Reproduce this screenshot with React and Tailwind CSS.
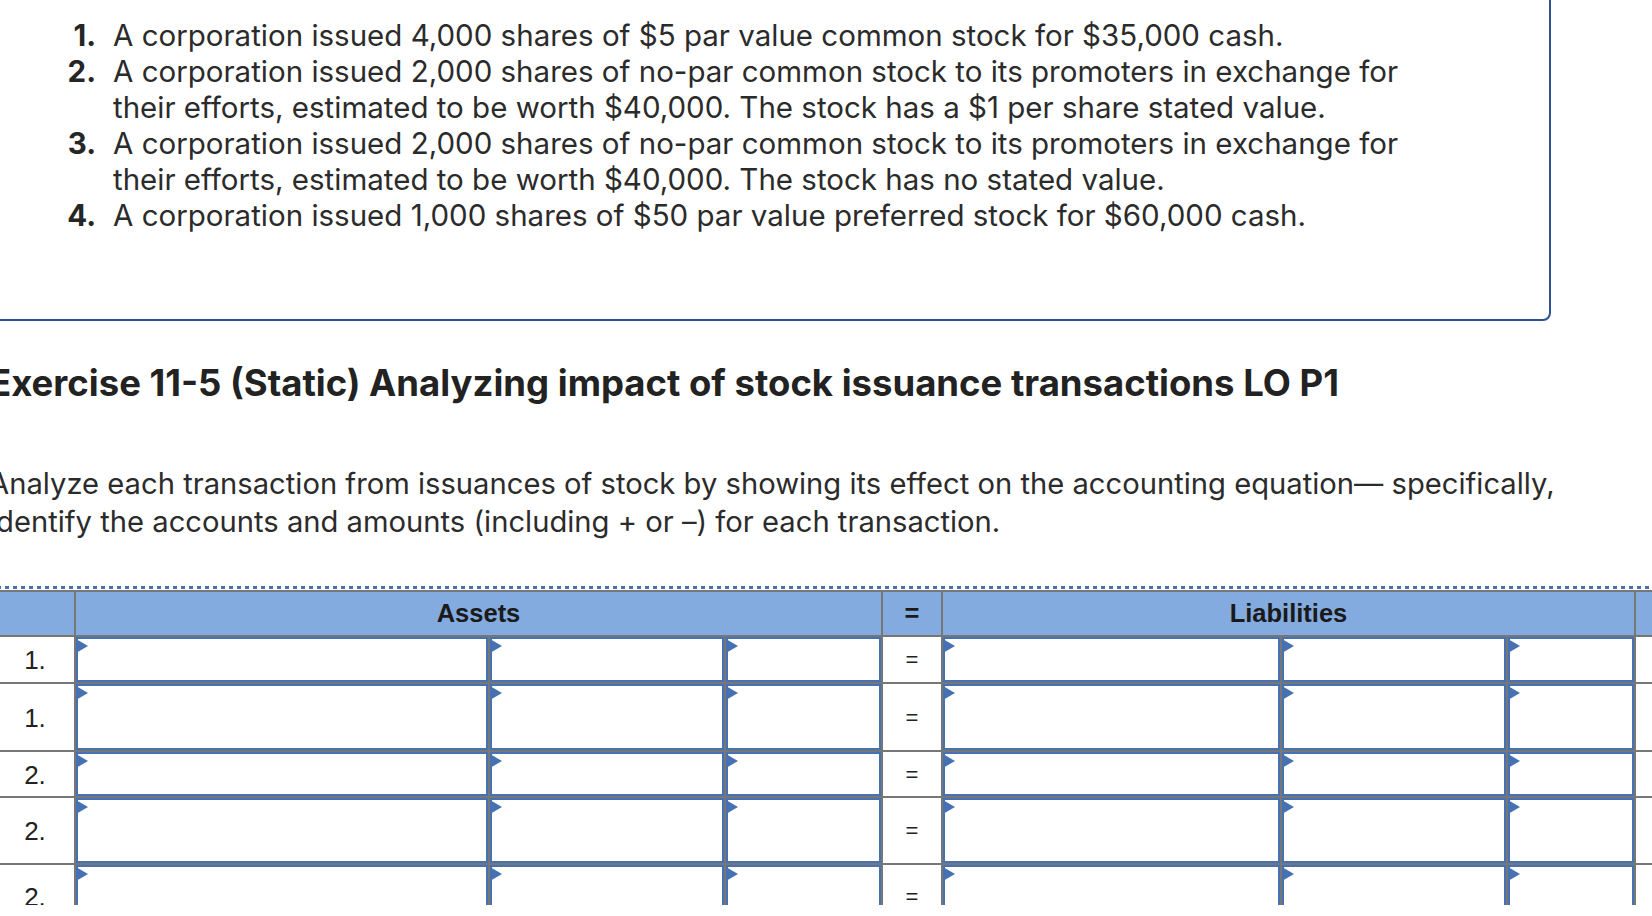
const items = [
  { n: '1.', lines: ['A corporation issued 4,000 shares of $5 par value common stock for $35,000 cash.'] },
  {
    n: '2.',
    lines: [
      'A corporation issued 2,000 shares of no-par common stock to its promoters in exchange for',
      'their efforts, estimated to be worth $40,000. The stock has a $1 per share stated value.',
    ],
  },
  {
    n: '3.',
    lines: [
      'A corporation issued 2,000 shares of no-par common stock to its promoters in exchange for',
      'their efforts, estimated to be worth $40,000. The stock has no stated value.',
    ],
  },
  { n: '4.', lines: ['A corporation issued 1,000 shares of $50 par value preferred stock for $60,000 cash.'] },
];

const rows = [
  { label: '1.', h: 'h-[45px]' },
  { label: '1.', h: 'h-[66px]' },
  { label: '2.', h: 'h-[44px]' },
  { label: '2.', h: 'h-[65px]' },
  { label: '2.', h: 'h-[62px]' },
];

function InputCell({ h }) {
  return (
    <div className={`relative bg-white border-2 border-[#4672b4] ${h}`}>
      <span className="absolute -left-[2px] top-0 w-0 h-0 border-y-[7px] border-y-transparent border-l-[12px] border-l-[#4672b4]" />
    </div>
  );
}

function PlainCell({ h, children }) {
  return (
    <div className={`flex items-center justify-center bg-white text-[#222] ${h}`}>
      {children}
    </div>
  );
}

export default function App() {
  return (
    <div className="h-[916px] w-full overflow-hidden bg-white">
      <div className="h-[905px] overflow-hidden font-['Inter',sans-serif] text-[#2b2b2b]">
        {/* Question box */}
        <div className="-mt-[4px] -ml-[12px] w-[1563px] h-[325px] border-2 border-[#2b5394] rounded-br-[8px] pt-[19px]">
          {items.map((item) => (
            <div key={item.n + item.lines[1]} className="flex text-[29.5px] leading-[36px]">
              <div className="w-[106px] shrink-0 text-right font-bold text-[#262626]">{item.n}</div>
              <div className="ml-[17px] whitespace-nowrap">
                {item.lines.map((line) => (
                  <div key={line}>{line}</div>
                ))}
              </div>
            </div>
          ))}
        </div>

        <div className="-ml-[11px]">
          <h2 className="mt-[40px] text-[36.5px] leading-[44px] font-bold text-[#222] whitespace-nowrap">
            Exercise 11-5 (Static) Analyzing impact of stock issuance transactions LO P1
          </h2>

          <p className="mt-[60px] text-[29.2px] leading-[38px] whitespace-nowrap">
            Analyze each transaction from issuances of stock by showing its effect on the accounting equation— specifically,
            <br />
            identify the accounts and amounts (including + or –) for each transaction.
          </p>

          {/* Table */}
          <div className="mt-[45px] w-[1700px]">
            <div className="h-[3px] mb-[1px] bg-[repeating-linear-gradient(90deg,#4672b4_0_4px,transparent_4px_8px)]" />
            <div className="grid w-max grid-cols-[85px_412px_234px_155px_58px_337px_224px_126px_58px_400px] gap-[2px] bg-[#777] border-t-2 border-[#777] font-['Liberation_Sans',Arial,sans-serif]">
              <div className="h-[43px] bg-[#83abdf]" />
              <div className="col-span-3 flex h-[43px] items-center justify-center bg-[#83abdf] text-[25.5px] font-bold text-[#1a1a1a]">
                Assets
              </div>
              <div className="flex h-[43px] items-center justify-center bg-[#83abdf] text-[25.5px] font-bold text-[#1a1a1a]">
                =
              </div>
              <div className="col-span-3 flex h-[43px] items-center justify-center bg-[#83abdf] text-[25.5px] font-bold text-[#1a1a1a]">
                Liabilities
              </div>
              <div className="flex h-[43px] items-center justify-center bg-[#83abdf] text-[25.5px] font-bold text-[#1a1a1a]">
                +
              </div>
              <div className="flex h-[43px] items-center justify-center bg-[#83abdf] text-[25.5px] font-bold text-[#1a1a1a]">
                Equity
              </div>

              {rows.map((r, i) => (
                <div key={i} className="contents">
                  <PlainCell h={r.h}>
                    <span className="pl-[7px] pt-[2px] text-[26px]">{r.label}</span>
                  </PlainCell>
                  <InputCell h={r.h} />
                  <InputCell h={r.h} />
                  <InputCell h={r.h} />
                  <PlainCell h={r.h}>
                    <span className="text-[22px]">=</span>
                  </PlainCell>
                  <InputCell h={r.h} />
                  <InputCell h={r.h} />
                  <InputCell h={r.h} />
                  <PlainCell h={r.h}>
                    <span className="text-[22px]">+</span>
                  </PlainCell>
                  <InputCell h={r.h} />
                </div>
              ))}
            </div>
          </div>
        </div>
      </div>
    </div>
  );
}
